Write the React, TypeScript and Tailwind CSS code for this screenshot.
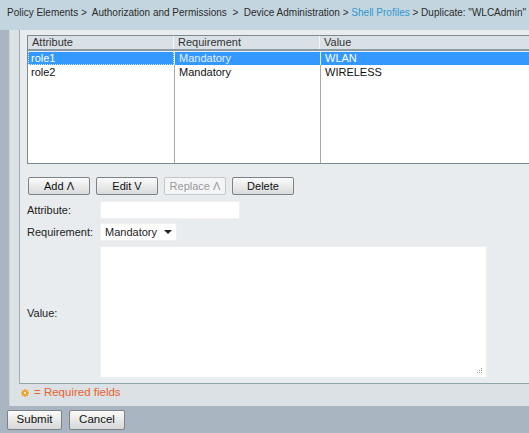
import React from "react";

const Btn = ({ children, disabled, w }: { children: React.ReactNode; disabled?: boolean; w: string }) => (
  <div
    className={
      "flex h-[18px] items-center justify-center rounded-[2px] border text-[11px] " +
      w +
      (disabled
        ? " border-[#c4c8cb] bg-[#f4f5f6] text-[#9a9a9a]"
        : " border-[#7d8286] bg-gradient-to-b from-[#fbfbfb] to-[#d9dadb] text-[#111]")
    }
  >
    {children}
  </div>
);

export default function App() {
  return (
    <div
      className="w-[529px] h-[433px] overflow-hidden bg-[#a9b5c0] text-[#222]"
      style={{ fontFamily: '"Liberation Sans", Arial, sans-serif' }}
    >
      {/* breadcrumb */}
      <div className="h-[30px] bg-[#c3d6df] px-[7px] pt-[7px] text-[10px] leading-[12px] whitespace-nowrap text-[#2b2b2b]">
        Policy Elements &gt;&nbsp; Authorization and Permissions &nbsp;&gt;&nbsp; Device Administration &gt;&nbsp;
        <span className="text-[#2f96cf]">Shell Profiles</span> &gt; Duplicate: "WLCAdmin"
      </div>

      <div className="flex">
        <div className="w-[9px] shrink-0" />
        <div className="flex-1 h-[376px] border-l border-[#cdd5da] bg-[#dbe1e5] flex flex-col">
          <div className="flex h-[354px]">
            <div className="w-[9px] shrink-0" />
            <div className="flex-1 border-l border-[#a3afb6] border-b border-b-[#8fa7a8] bg-[#e8ecee] pt-[5px] pl-[7px] overflow-hidden">
              {/* table */}
              <div className="w-[540px] h-[129px] border border-[#7e8a90] bg-white flex flex-col">
                <div className="h-[15px] bg-[#d9e1e6] border-b-2 border-[#8d9aa1] grid grid-cols-[146px_146px_1fr] text-[11px] leading-[13px] text-[#333]">
                  <div className="pl-[4px] border-r border-[#f4f6f7]">Attribute</div>
                  <div className="pl-[4px] border-r border-[#f4f6f7]">Requirement</div>
                  <div className="pl-[4px]">Value</div>
                </div>
                <div className="flex-1 relative grid grid-cols-[146px_146px_1fr] grid-rows-[14px_14px_1fr] text-[11px] leading-[13px]">
                  <div className="pl-[3px] bg-[#3399ff] text-white outline outline-1 outline-dotted outline-[#d8e8ff] -outline-offset-1 border-t border-[#e6f0fa]">role1</div>
                  <div className="pl-[4px] bg-[#3399ff] text-[#e6f0ff] border-l border-[#a8a8a8] border-t border-[#e6f0fa]">Mandatory</div>
                  <div className="pl-[4px] bg-[#3399ff] text-white border-l border-[#a8a8a8] border-t border-[#e6f0fa]">WLAN</div>
                  <div className="pl-[3px] pt-[1px] text-[#111]">role2</div>
                  <div className="pl-[4px] pt-[1px] text-[#111] border-l border-[#a8a8a8]">Mandatory</div>
                  <div className="pl-[4px] pt-[1px] text-[#111] border-l border-[#a8a8a8]">WIRELESS</div>
                  <div />
                  <div className="border-l border-[#a8a8a8]" />
                  <div className="border-l border-[#a8a8a8]" />
                </div>
              </div>

              {/* buttons */}
              <div className="flex gap-[6px] mt-[13px] ml-[1px]">
                <Btn w="w-[62px]">Add Λ</Btn>
                <Btn w="w-[62px]">Edit V</Btn>
                <Btn w="w-[62px]" disabled>Replace Λ</Btn>
                <Btn w="w-[62px]">Delete</Btn>
              </div>

              {/* form */}
              <div className="mt-[6px] flex items-center text-[11px]">
                <div className="w-[73px]">Attribute:</div>
                <div className="w-[140px] h-[18px] bg-white border border-[#eef0f1]" />
              </div>
              <div className="mt-[4px] flex items-center text-[11px]">
                <div className="w-[73px] whitespace-nowrap">Requirement:</div>
                <div className="w-[77px] h-[18px] bg-white border border-[#eef0f1] flex items-center pl-[4px] text-[11px]">
                  <span>Mandatory</span>
                  <svg width="8" height="5" viewBox="0 0 8 5" className="ml-[7px]">
                    <path d="M0 0 L8 0 L4 4 Z" fill="#222" />
                  </svg>
                </div>
              </div>
              <div className="mt-[5px] flex items-center text-[11px]">
                <div className="w-[73px] pt-[2px]">Value:</div>
                <div className="relative w-[387px] h-[132px] bg-white border border-[#eef0f1]">
                  <svg width="7" height="7" viewBox="0 0 7 7" className="absolute right-[3px] bottom-[3px]">
                    <rect x="5" y="1" width="1" height="1" fill="#999" />
                    <rect x="3" y="3" width="1" height="1" fill="#999" />
                    <rect x="5" y="3" width="1" height="1" fill="#999" />
                    <rect x="1" y="5" width="1" height="1" fill="#999" />
                    <rect x="3" y="5" width="1" height="1" fill="#999" />
                    <rect x="5" y="5" width="1" height="1" fill="#999" />
                  </svg>
                </div>
              </div>
            </div>
          </div>
          {/* required */}
          <div className="flex items-center h-[18px] pl-[11px] text-[11.5px] text-[#e9622b]">
            <svg width="8" height="8" viewBox="0 0 8 8">
              <g stroke="#f29a16" strokeWidth="1.4">
                <line x1="4" y1="0" x2="4" y2="8" />
                <line x1="0" y1="4" x2="8" y2="4" />
                <line x1="1.2" y1="1.2" x2="6.8" y2="6.8" />
                <line x1="6.8" y1="1.2" x2="1.2" y2="6.8" />
              </g>
              <circle cx="4" cy="4" r="2.6" fill="#f29a16" />
              <circle cx="4" cy="4" r="1.2" fill="#fff3d0" />
            </svg>
            <span className="ml-[5px]">= Required fields</span>
          </div>
        </div>
      </div>

      {/* submit */}
      <div className="flex gap-[7px] pl-[7px] pt-[4px]">
        <div className="w-[55px] h-[20px] flex items-center justify-center rounded-[2px] border border-[#7d8286] bg-gradient-to-b from-[#fbfbfb] to-[#d6d7d8] text-[11.5px] text-[#111]">
          Submit
        </div>
        <div className="w-[56px] h-[20px] flex items-center justify-center rounded-[2px] border border-[#7d8286] bg-gradient-to-b from-[#fbfbfb] to-[#d6d7d8] text-[11.5px] text-[#111]">
          Cancel
        </div>
      </div>
    </div>
  );
}
